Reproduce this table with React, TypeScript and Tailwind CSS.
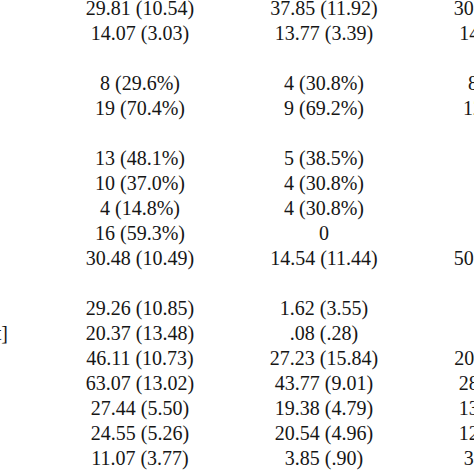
import React from 'react';

type Row = { label?: string; a: string; b: string; c: string } | null;

// null = spacer row between variable groups
const rows: Row[] = [
  { a: '29.81 (10.54)', b: '37.85 (11.92)', c: '30.12 (10.87)' },
  { a: '14.07 (3.03)', b: '13.77 (3.39)', c: '14.00 (3.11)' },
  null,
  { a: '8 (29.6%)', b: '4 (30.8%)', c: '8 (20.0%)' },
  { a: '19 (70.4%)', b: '9 (69.2%)', c: '12 (30.0%)' },
  null,
  { a: '13 (48.1%)', b: '5 (38.5%)', c: '' },
  { a: '10 (37.0%)', b: '4 (30.8%)', c: '' },
  { a: '4 (14.8%)', b: '4 (30.8%)', c: '' },
  { a: '16 (59.3%)', b: '0', c: '' },
  { a: '30.48 (10.49)', b: '14.54 (11.44)', c: '50.21 (10.36)' },
  null,
  { a: '29.26 (10.85)', b: '1.62 (3.55)', c: '' },
  { label: 'Total score [self-report]', a: '20.37 (13.48)', b: '.08 (.28)', c: '' },
  { a: '46.11 (10.73)', b: '27.23 (15.84)', c: '20.44 (11.20)' },
  { a: '63.07 (13.02)', b: '43.77 (9.01)', c: '28.93 (8.72)' },
  { a: '27.44 (5.50)', b: '19.38 (4.79)', c: '13.05 (4.41)' },
  { a: '24.55 (5.26)', b: '20.54 (4.96)', c: '12.86 (4.02)' },
  { a: '11.07 (3.77)', b: '3.85 (.90)', c: '3.62 (1.04)' },
];

export default function App() {
  return (
    <div className="w-[474px] h-[474px] overflow-hidden bg-white text-[#161616] font-serif text-[20px] leading-[25px]">
      <div className="[font-family:Liberation_Serif] -mt-[4px] grid grid-cols-[48px_184px_184px_184px] w-[600px]">
        {rows.map((r, i) =>
          r === null ? (
            <div key={i} className="col-span-4 h-[25px]" />
          ) : (
            <React.Fragment key={i}>
              <div className="flex justify-end pr-[40px] whitespace-nowrap">
                <span>{r.label ?? ''}</span>
              </div>
              <div className="text-center whitespace-nowrap">{r.a}</div>
              <div className="text-center whitespace-nowrap">{r.b}</div>
              <div className="text-center whitespace-nowrap">{r.c}</div>
            </React.Fragment>
          )
        )}
      </div>
    </div>
  );
}
